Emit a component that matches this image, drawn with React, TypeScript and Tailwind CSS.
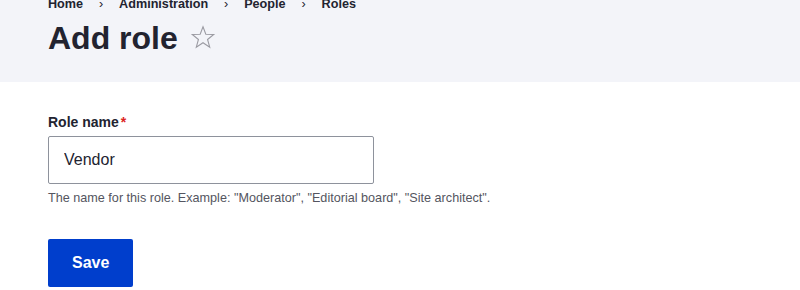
const crumbs = ["Home", "Administration", "People", "Roles"]

export default function App() {
  return (
    <div className="min-h-[290px] bg-white font-['Liberation_Sans',Arial,sans-serif] text-[#222330]">
      <div className="bg-[#f3f4f9] px-12 pb-6">
        <nav className="-mt-[4px] flex items-center text-[12.64px] font-bold leading-4">
          {crumbs.map((c, i) => (
            <span key={c} className="flex items-center">
              {i > 0 && <span className="mx-[15px] inline-block w-[6px] text-center font-normal">›</span>}
              {c}
            </span>
          ))}
        </nav>
        <div className="mt-[6px] flex items-center">
          <h1 className="text-[32px] font-bold leading-10">Add role</h1>
          <svg className="ml-[12px] mt-[-2px]" width="26" height="26" viewBox="0 0 24 24" fill="none">
            <path
              d="M12 2.5l2.6 6.9 7.3.3-5.7 4.6 2 7.1L12 17.3l-6.2 4.1 2-7.1-5.7-4.6 7.3-.3z"
              stroke="#9a9aa2"
              strokeWidth="1"
              strokeLinejoin="miter"
            />
          </svg>
        </div>
      </div>
      <form className="px-12 pt-[31px]">
        <label className="block text-[14px] font-bold leading-[18px]">
          Role name<span className="ml-[2px] text-[#dc2323]">*</span>
        </label>
        <input
          defaultValue="Vendor"
          className="mt-[5px] block h-12 w-[326px] rounded-[2px] border border-[#8e929c] px-[15px] text-[16px] text-[#222330] outline-none"
        />
        <p className="mt-[6px] text-[12.64px] leading-4 text-[#545560]">
          The name for this role. Example: "Moderator", "Editorial board", "Site architect".
        </p>
        <button
          type="button"
          className="mt-[33px] rounded-[2px] bg-[#003ecc] px-6 py-[15px] text-[16px] font-bold leading-[18px] text-white"
        >
          Save
        </button>
      </form>
    </div>
  )
}
